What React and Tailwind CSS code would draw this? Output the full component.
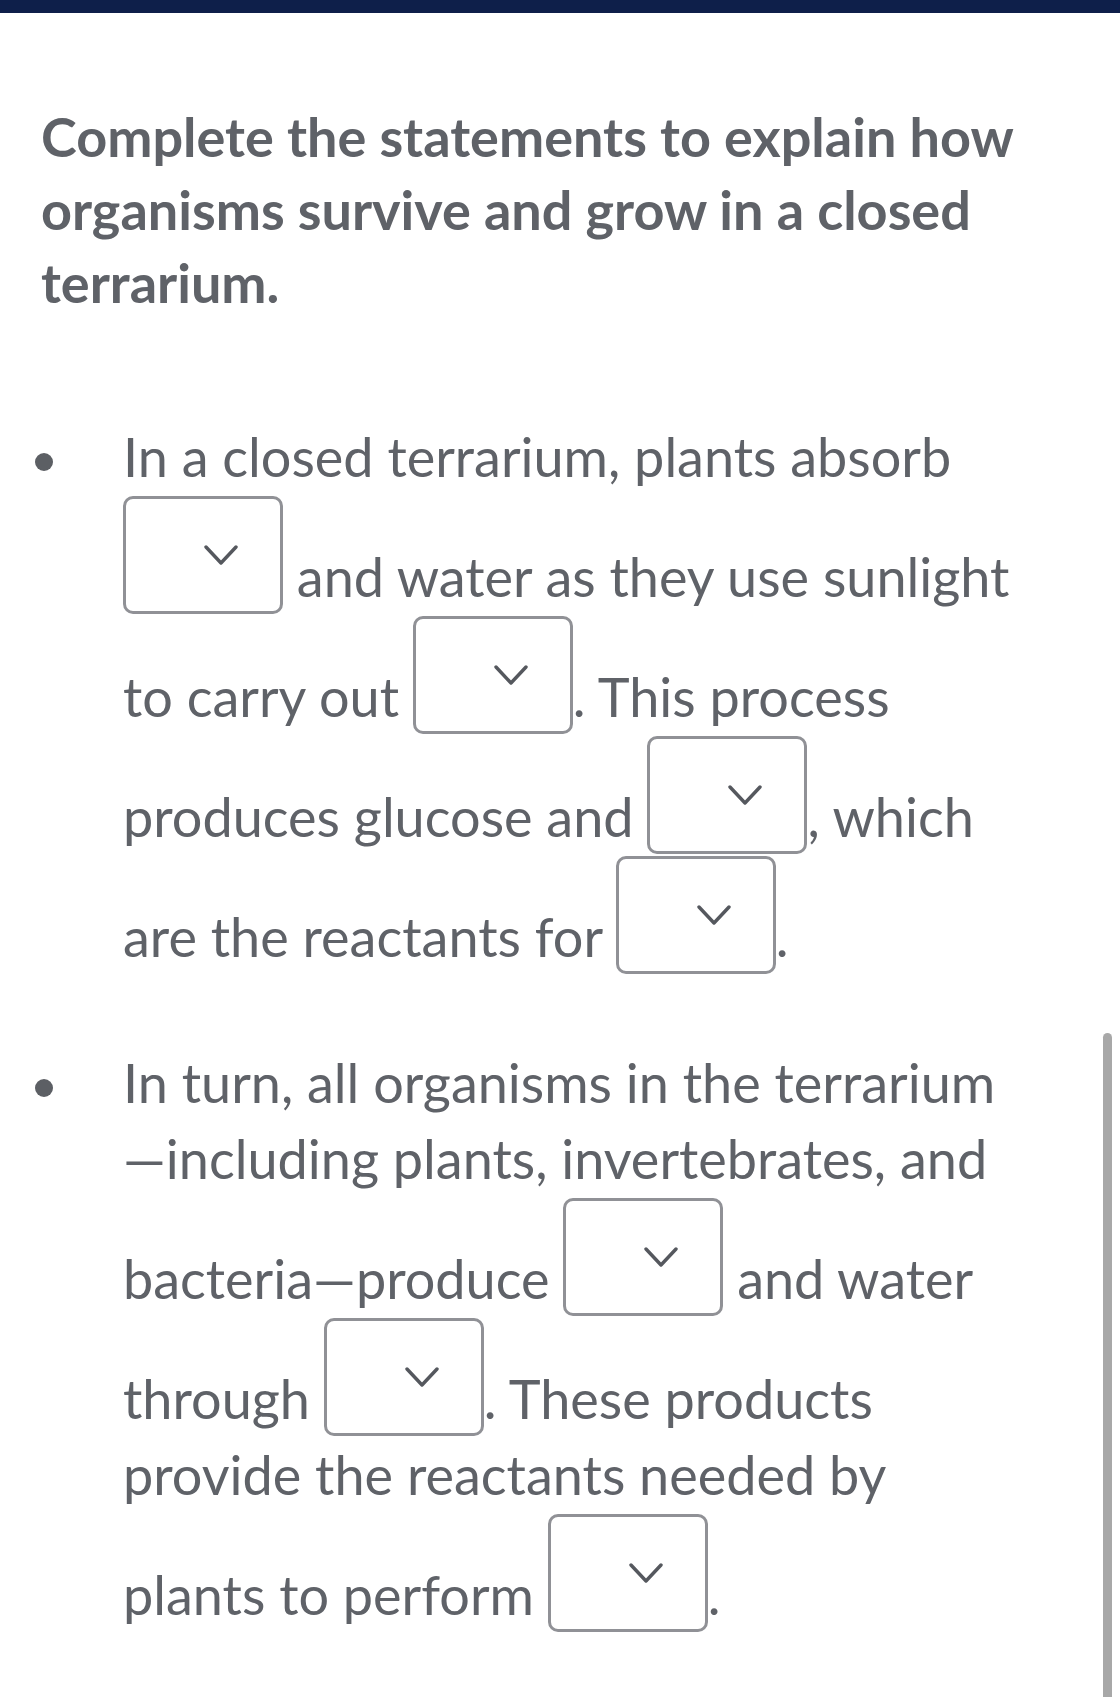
import React from "react";

const Drop = () => (
  <span className="mt-[1px] inline-block h-[118px] w-[160px] overflow-hidden rounded-[10px] border-[3px] border-[#909196] bg-white align-[-17px]">
    <span className="flex h-full w-full items-center justify-end pr-[42px]">
      <svg width="34" height="21" viewBox="0 0 34 21" className="block">
        <polyline
          points="2,2 17,18 32,2"
          fill="none"
          stroke="#55585e"
          strokeWidth="3.4"
          strokeLinecap="round"
          strokeLinejoin="round"
        />
      </svg>
    </span>
  </span>
);

const Bullet = () => (
  <span className="w-[82px] shrink-0">
    <span className="-ml-[6px] mt-[34px] block h-[18px] w-[18px] rounded-full bg-[#5c5f64]" />
  </span>
);

export default function App() {
  return (
    <div className="relative min-h-[1697px] bg-white font-[Lato,sans-serif] text-[#5f6268]">
      <div className="h-[13px] bg-[#0e1f4a]" />
      <div className="pl-[41px] pr-[88px] pt-[87px]">
        <h1 className="text-[54px] font-bold leading-[73px]">
          Complete the statements to explain how organisms survive and grow in a closed terrarium.
        </h1>
        <ul className="mt-[100px] flex flex-col gap-[70px] text-[54px] leading-[76px]">
          <li className="flex">
            <Bullet />
            <p>
              In a closed terrarium, plants absorb <Drop /> and water as they use sunlight to carry out <Drop />. This process produces glucose and <Drop />, which are the reactants for <Drop />.
            </p>
          </li>
          <li className="flex">
            <Bullet />
            <p>
              In turn, all organisms in the terrarium—including plants, invertebrates, and bacteria—produce <Drop /> and water through <Drop />. These products provide the reactants needed by plants to perform <Drop />.
            </p>
          </li>
        </ul>
      </div>
      <div className="absolute bottom-0 right-[8px] top-[1033px] w-[9px] rounded-t-full bg-[#a8a8a8]" />
    </div>
  );
}
